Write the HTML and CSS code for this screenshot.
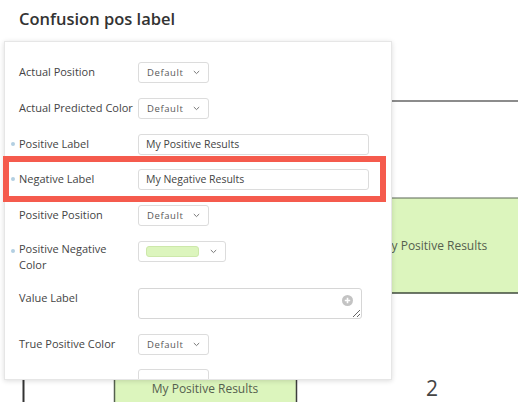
FILE: index.html
```html
<!DOCTYPE html>
<html>
<head>
<meta charset="utf-8">
<link rel="stylesheet" href="styles.css">
</head>
<body>
<div class="page">
  <h1 class="title">Confusion pos label</h1>
  <svg class="chart" width="518" height="361" viewBox="0 0 518 361">
    <line x1="300" y1="60" x2="518" y2="60" stroke="#8c8c8c" stroke-width="2"/>
    <rect x="297" y="157" width="240" height="95" fill="#dcf5bd"/>
    <line x1="297" y1="157" x2="518" y2="157" stroke="#5a6656" stroke-width="1.2"/>
    <line x1="297" y1="252" x2="518" y2="252" stroke="#3f4a3c" stroke-width="1.5"/>
    <text x="434" y="209" class="cell-text" text-anchor="middle">My Positive Results</text>
    <rect x="114" y="335" width="183" height="30" fill="#dcf5bd"/>
    <line x1="114.5" y1="335" x2="114.5" y2="361" stroke="#55604f" stroke-width="1.5"/>
    <line x1="296.5" y1="335" x2="296.5" y2="361" stroke="#3d3d3d" stroke-width="1.5"/>
    <line x1="23.5" y1="335" x2="23.5" y2="361" stroke="#333" stroke-width="2"/>
    <text x="205" y="352" class="cell-text" text-anchor="middle">My Positive Results</text>
    <text x="432" y="355" class="big-num" text-anchor="middle">2</text>
  </svg>

  <div class="popover">
    <div class="rows">
      <div class="row">
        <div class="label">Actual Position</div>
        <div class="select"><span>Default</span><svg class="chev" width="7" height="5" viewBox="0 0 7 5"><path d="M0.8 1 L3.5 3.6 L6.2 1" fill="none" stroke="#777" stroke-width="1"/></svg></div>
      </div>
      <div class="row">
        <div class="label">Actual Predicted Color</div>
        <div class="select"><span>Default</span><svg class="chev" width="7" height="5" viewBox="0 0 7 5"><path d="M0.8 1 L3.5 3.6 L6.2 1" fill="none" stroke="#777" stroke-width="1"/></svg></div>
      </div>
      <div class="row dotted">
        <div class="label">Positive Label</div>
        <div class="input">My Positive Results</div>
      </div>
      <div class="row dotted">
        <div class="label">Negative Label</div>
        <div class="input">My Negative Results</div>
      </div>
      <div class="row">
        <div class="label">Positive Position</div>
        <div class="select"><span>Default</span><svg class="chev" width="7" height="5" viewBox="0 0 7 5"><path d="M0.8 1 L3.5 3.6 L6.2 1" fill="none" stroke="#777" stroke-width="1"/></svg></div>
      </div>
      <div class="row dotted tall">
        <div class="label multi">Positive Negative<br>Color</div>
        <div class="select color-select"><span class="swatch"></span><svg class="chev" width="7" height="5" viewBox="0 0 7 5"><path d="M0.8 1 L3.5 3.6 L6.2 1" fill="none" stroke="#777" stroke-width="1"/></svg></div>
      </div>
      <div class="row">
        <div class="label">Value Label</div>
        <div class="textarea-wrap">
          <textarea class="textarea"></textarea>
          <span class="plus"><svg width="11" height="11" viewBox="0 0 11 11"><circle cx="5.5" cy="5.5" r="5.5" fill="#c3c3c3"/><path d="M5.5 2.8 V8.2 M2.8 5.5 H8.2" stroke="#fff" stroke-width="1.6"/></svg></span>
        </div>
      </div>
      <div class="row">
        <div class="label">True Positive Color</div>
        <div class="select"><span>Default</span><svg class="chev" width="7" height="5" viewBox="0 0 7 5"><path d="M0.8 1 L3.5 3.6 L6.2 1" fill="none" stroke="#777" stroke-width="1"/></svg></div>
      </div>
      <div class="row">
        <div class="label"></div>
        <div class="select"></div>
      </div>
    </div>
  </div>

  <div class="highlight"></div>
</div>
</body>
</html>
```

FILE: styles.css
```css
* { box-sizing: border-box; }
html, body { margin: 0; padding: 0; background: #fff; }
body {
  font-family: "Open Sans", "Liberation Sans", sans-serif;
  color: #444;
  width: 518px;
  height: 402px;
  overflow: hidden;
}
.page {
  position: relative;
  width: 518px;
  height: 402px;
}
.title {
  margin: 0;
  height: 41px;
  padding: 7px 0 0 19px;
  font-size: 16.5px;
  font-weight: 600;
  color: #333;
  line-height: 24px;
}
.chart { display: block; }
.cell-text {
  font-family: "Open Sans", "Liberation Sans", sans-serif;
  font-size: 12px;
  fill: #55604f;
}
.big-num {
  font-family: "Open Sans", "Liberation Sans", sans-serif;
  font-size: 21px;
  fill: #444;
}
.popover {
  position: absolute;
  left: 4px;
  top: 41px;
  width: 388px;
  height: 339px;
  background: #fff;
  border: 1px solid #e6e6e6;
  box-shadow: 0 1px 5px rgba(0, 0, 0, 0.14);
  overflow: hidden;
}
.rows {
  display: flex;
  flex-direction: column;
  gap: 14.8px;
  padding: 20px 0 0 14px;
}
.row {
  position: relative;
  display: flex;
  align-items: flex-start;
}
.row.dotted::before {
  content: "";
  position: absolute;
  left: -8px;
  top: 8px;
  width: 4px;
  height: 4px;
  border-radius: 50%;
  background: #b3cfe2;
}
.label {
  width: 119px;
  flex: none;
  font-size: 11px;
  line-height: 19px;
  color: #444;
  white-space: nowrap;
}
.label.multi {
  line-height: 16px;
  padding-top: 0;
}
.select {
  width: 71px;
  height: 21px;
  border: 1px solid #dcdcdc;
  border-radius: 3px;
  display: flex;
  align-items: center;
  justify-content: space-between;
  padding: 0 8px 0 8px;
  font-size: 9.5px;
  letter-spacing: 0.6px;
  color: #5a5a5a;
}
.chev { display: block; flex: none; }
.color-select {
  width: 88px;
  padding-left: 7px;
  padding-right: 8px;
}
.swatch {
  display: block;
  width: 53px;
  height: 11px;
  border-radius: 3px;
  background: #dcf5bd;
  border: 1px solid #cde8aa;
}
.input {
  width: 231px;
  height: 21px;
  border: 1px solid #dcdcdc;
  border-radius: 3px;
  padding: 0 7px;
  font-size: 10.5px;
  line-height: 19px;
  color: #444;
}
.textarea-wrap {
  position: relative;
  width: 224px;
  height: 31px;
}
.textarea {
  display: block;
  width: 224px;
  height: 31px;
  margin: 0;
  border: 1px solid #d6d6d6;
  border-radius: 3px;
  background: #fff;
  resize: both;
  font-family: inherit;
}
.plus {
  position: absolute;
  right: 9px;
  top: 7px;
  width: 11px;
  height: 11px;
}
.plus svg { display: block; }
.highlight {
  position: absolute;
  left: 3px;
  top: 156px;
  width: 383px;
  height: 46px;
  border: 6px solid #f55b4d;
}
```
